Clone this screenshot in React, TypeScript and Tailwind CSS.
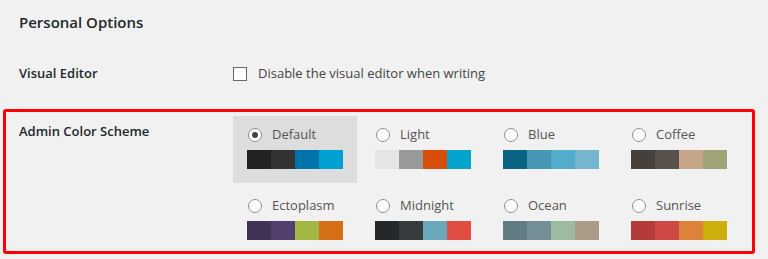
import React, { useState } from "react";

interface Scheme {
  name: string;
  colors: string[];
}

const schemes: Scheme[] = [
  { name: "Default", colors: ["#222222", "#333333", "#0073aa", "#00a0d2"] },
  { name: "Light", colors: ["#e5e5e5", "#999999", "#d64e07", "#04a4cc"] },
  { name: "Blue", colors: ["#096484", "#4796b3", "#52accc", "#74b6ce"] },
  { name: "Coffee", colors: ["#46403c", "#59524c", "#c7a589", "#9ea476"] },
  { name: "Ectoplasm", colors: ["#413256", "#523f6d", "#a3b745", "#d46f15"] },
  { name: "Midnight", colors: ["#25282b", "#363b3f", "#69a8bb", "#e14d43"] },
  { name: "Ocean", colors: ["#627c83", "#738e96", "#9ebaa0", "#aa9d88"] },
  { name: "Sunrise", colors: ["#b43c38", "#cf4944", "#dd823b", "#ccaf0b"] },
];

export default function App() {
  const [selected, setSelected] = useState("Default");
  const [disableEditor, setDisableEditor] = useState(false);

  return (
    <div className="w-[768px] h-[259px] bg-[#f1f1f1] text-[#23282d] font-['Open_Sans',sans-serif] overflow-hidden">
      <h2 className="pl-[19px] pt-[10px] text-[15px] leading-[24px] font-semibold">
        Personal Options
      </h2>

      <div className="flex items-center mt-[30px] h-[20px]">
        <div className="w-[233px] pl-[19px] text-[13px] font-semibold">
          Visual Editor
        </div>
        <label className="flex items-center gap-[11px] text-[13px] text-[#444] cursor-pointer">
          <span
            onClick={() => setDisableEditor(!disableEditor)}
            className="w-[14px] h-[14px] border border-[#666] bg-white flex items-center justify-center text-[10px]"
          >
            {disableEditor ? "✓" : ""}
          </span>
          Disable the visual editor when writing
        </label>
      </div>

      <div className="mt-[25px] ml-[3px] w-[752px] h-[145px] border-[3px] border-[#ff0000] rounded-[3px] flex">
        <div className="w-[227px] pl-[13px] pt-[10px] text-[13px] font-semibold shrink-0">
          Admin Color Scheme
        </div>
        <div className="grid grid-cols-4 gap-x-[4px] gap-y-[4px] pt-[4px] w-[508px]">
          {schemes.map((s) => {
            const active = s.name === selected;
            return (
              <div
                key={s.name}
                onClick={() => setSelected(s.name)}
                className={`w-[124px] h-[67px] pl-[14px] pt-[12px] cursor-pointer ${
                  active ? "bg-[#dddddd]" : ""
                }`}
              >
                <div className="flex items-center h-[14px] gap-[10px] pl-[1px]">
                  <span className="w-[14px] h-[14px] rounded-full border border-[#8c8f94] bg-white flex items-center justify-center shrink-0">
                    {active && (
                      <span className="w-[6px] h-[6px] rounded-full bg-[#444]" />
                    )}
                  </span>
                  <span className="text-[13px] text-[#555]">{s.name}</span>
                </div>
                <div className="flex mt-[8px]">
                  {s.colors.map((c) => (
                    <div
                      key={c}
                      className="w-[24px] h-[19px]"
                      style={{ backgroundColor: c }}
                    />
                  ))}
                </div>
              </div>
            );
          })}
        </div>
      </div>
    </div>
  );
}
